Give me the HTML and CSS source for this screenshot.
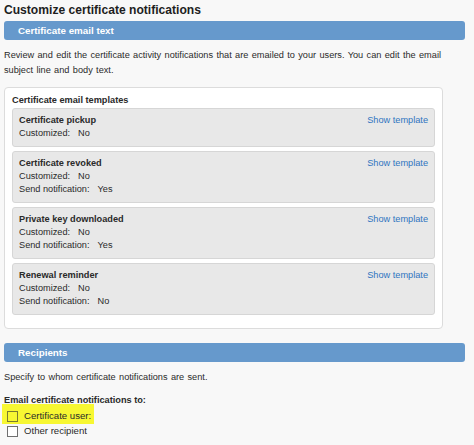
FILE: index.html
```html
<!DOCTYPE html>
<html>
<head>
<meta charset="utf-8">
<link rel="stylesheet" href="styles.css">
</head>
<body>
<div class="page">
  <h1 class="title">Customize certificate notifications</h1>
  <div class="bar">Certificate email text</div>
  <p class="desc">Review and edit the certificate activity notifications that are emailed to your users. You can edit the email subject line and body text.</p>
  <div class="card">
    <div class="card-title">Certificate email templates</div>
    <div class="items">
      <div class="item">
        <div class="item-main">
          <div class="item-name">Certificate pickup</div>
          <div><span class="lbl">Customized:</span>No</div>
        </div>
        <a class="link">Show template</a>
      </div>
      <div class="item">
        <div class="item-main">
          <div class="item-name">Certificate revoked</div>
          <div><span class="lbl">Customized:</span>No</div>
          <div><span class="lbl">Send notification:</span>Yes</div>
        </div>
        <a class="link">Show template</a>
      </div>
      <div class="item">
        <div class="item-main">
          <div class="item-name">Private key downloaded</div>
          <div><span class="lbl">Customized:</span>No</div>
          <div><span class="lbl">Send notification:</span>Yes</div>
        </div>
        <a class="link">Show template</a>
      </div>
      <div class="item">
        <div class="item-main">
          <div class="item-name">Renewal reminder</div>
          <div><span class="lbl">Customized:</span>No</div>
          <div><span class="lbl">Send notification:</span>No</div>
        </div>
        <a class="link">Show template</a>
      </div>
    </div>
  </div>
  <div class="bar bar-recip">Recipients</div>
  <p class="desc desc-recip">Specify to whom certificate notifications are sent.</p>
  <div class="sub-title">Email certificate notifications to:</div>
  <div class="checks">
    <label class="check hl"><span class="box"></span>Certificate user:</label>
    <label class="check"><span class="box"></span>Other recipient</label>
  </div>
</div>
</body>
</html>
```

FILE: styles.css
```css
html, body {
  margin: 0;
  padding: 0;
  background: #f8f8f8;
}
.page {
  font-family: "Liberation Sans", Arial, sans-serif;
  font-size: 9.2px;
  color: #2a2a2a;
  padding: 2px 9px 0 4px;
}
.title {
  margin: 0;
  font-size: 12.1px;
  line-height: 16px;
  font-weight: bold;
  color: #1e1e1e;
}
.bar {
  margin-top: 3px;
  height: 19px;
  line-height: 19px;
  background: #6699cc;
  border-radius: 3px;
  color: #fff;
  font-weight: bold;
  font-size: 9.8px;
  padding-left: 14px;
}
.desc {
  margin: 8px 0 0;
  line-height: 15px;
  width: 444px;
  word-spacing: 0.8px;
}
.card {
  margin-top: 9px;
  width: 423px;
  background: #fff;
  border: 1px solid #dcdcdc;
  border-radius: 4px;
  padding: 6px 7px 13px;
}
.card-title {
  font-weight: bold;
  line-height: 13px;
  margin-bottom: 1px;
}
.items {
  display: flex;
  flex-direction: column;
  gap: 4px;
}
.item {
  display: flex;
  justify-content: space-between;
  align-items: flex-start;
  background: #e8e8e8;
  border: 1px solid #d6d6d6;
  border-radius: 3px;
  padding: 5px 6px 6px;
  line-height: 13px;
}
.item-name {
  font-weight: bold;
}
.lbl {
  margin-right: 8px;
}
.link {
  color: #2f74c0;
  cursor: pointer;
}
.bar-recip {
  margin-top: 14px;
}
.desc-recip {
  margin-top: 8px;
}
.sub-title {
  margin-top: 9px;
  font-weight: bold;
  line-height: 13px;
}
.checks {
  display: flex;
  flex-direction: column;
  align-items: flex-start;
}
.check {
  display: flex;
  align-items: center;
  gap: 6px;
  line-height: 14px;
  padding-left: 3px;
  font-size: 9.6px;
}
.hl {
  background: #f7f732;
  padding: 5px 3px 1px 5px;
  margin-left: -2px;
  margin-top: -3px;
}
.box {
  width: 9px;
  height: 9px;
  border: 1px solid #6f6f6f;
  background: #fff;
}
.hl .box {
  background: transparent;
  border-color: #7a7a30;
}
```
